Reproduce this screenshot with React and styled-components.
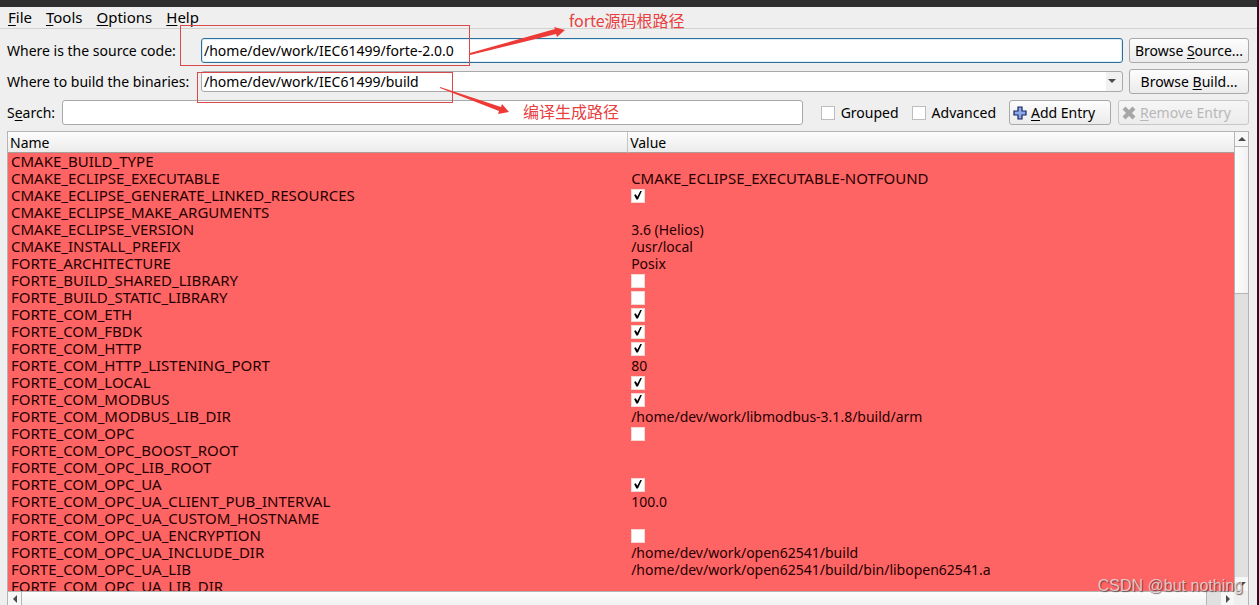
import { useState } from "react";
import styled, { createGlobalStyle } from "styled-components";

const GlobalStyle = createGlobalStyle`
  * {
    box-sizing: border-box;
  }

  body {
    margin: 0;
    overflow: hidden;
    background-color: #efefef;
    color: #000;
    font-family: "Noto Sans", "Noto Sans CJK SC", sans-serif;
    font-size: 14px;
    line-height: 17px;
  }

  input, select, button {
    font: inherit;
    color: inherit;
  }
`;

const Window = styled.div`
  position: relative;
  display: flex;
  flex-direction: column;
  height: 100vh;
  border-right: 2px solid #330a26;
`;

const TitleBar = styled.div`
  flex: none;
  height: 7px;
  background-color: #302f2f;
`;

const MenuBar = styled.nav`
  flex: none;
  display: flex;
  gap: 14px;
  height: 22px;
  padding: 0 8px;
  border-bottom: 1px solid #d2d2d2;
  font-size: 15px;
`;

const MenuItem = styled.button`
  padding: 0;
  border: none;
  background: none;
`;

const Key = styled.span`
  text-decoration: underline;
  text-decoration-thickness: 1px;
  text-underline-offset: 2px;
`;

const Main = styled.main`
  flex: 1;
  min-height: 0;
  display: flex;
  flex-direction: column;
  gap: 6px;
  padding: 9px 8px 0 7px;
`;

const PathRow = styled.div`
  flex: none;
  display: grid;
  grid-template-columns: 188px 1fr 120px;
  align-items: center;
  gap: 6px;
  height: 25px;
`;

const SearchRow = styled.div`
  flex: none;
  display: flex;
  align-items: center;
  height: 25px;
  gap: 7px;
`;

const Label = styled.label`
  white-space: nowrap;
`;

const TextInput = styled.input`
  width: 100%;
  min-width: 0;
  height: 25px;
  padding: 0 2px;
  border: 1px solid ${(props) => (props.$active ? "#2f6f97" : "#a9a9a9")};
  border-radius: 3px;
  background-color: #fff;
  box-shadow: ${(props) => (props.$active ? "inset 0 0 0 1px #d8eefa" : "none")};
  outline: none;
`;

const Combo = styled.div`
  position: relative;
  height: 21px;
`;

const Select = styled.select`
  display: block;
  width: 100%;
  height: 21px;
  padding: 0 2px;
  border: 1px solid #a9a9a9;
  border-radius: 3px;
  background: linear-gradient(#f1f1f1, #f1f1f1) right / 16px 100% no-repeat #fff;
  appearance: none;
  outline: none;
`;

const ComboArrow = styled.svg`
  position: absolute;
  top: 8px;
  right: 7px;
  pointer-events: none;
`;

const Button = styled.button`
  flex: none;
  display: flex;
  align-items: center;
  justify-content: ${(props) => (props.$width ? "flex-start" : "center")};
  gap: 4px;
  width: ${(props) => props.$width || "100%"};
  height: 25px;
  padding: 0 3px;
  border: 1px solid #a9a9a9;
  border-radius: 3px;
  background: linear-gradient(#fdfdfd, #ebebeb);
  white-space: nowrap;

  &:disabled {
    border-color: #c8c8c8;
    color: #b8b8b8;
    background: linear-gradient(#f6f6f6, #ececec);
  }
`;

const Options = styled.div`
  display: flex;
  gap: 13px;
  padding: 0 6px 0 11px;
`;

const Option = styled.label`
  display: flex;
  align-items: center;
  gap: 6px;
`;

const CheckBox = styled.input.attrs({ type: "checkbox" })`
  flex: none;
  display: block;
  width: 14px;
  height: 14px;
  margin: 0;
  border: 1px solid ${(props) => (props.$cell ? "#f3d8d4" : "#bdbdbd")};
  background-color: #fff;
  appearance: none;

  &:checked::before {
    content: "";
    display: block;
    width: 8px;
    height: 9px;
    margin: 1px 2px;
    background-color: #000;
    clip-path: polygon(0 50%, 20% 42%, 40% 70%, 80% 0, 100% 0, 48% 100%, 28% 100%);
  }
`;

const Panel = styled.div`
  flex: 1;
  min-height: 0;
  display: grid;
  grid-template-columns: 1fr 14px;
  grid-template-rows: 1fr 14px;
  border: 1px solid #b4b4b4;
  border-bottom: none;
`;

const TableArea = styled.div`
  min-height: 0;
  overflow: hidden;
  background-color: #ff6464;
`;

const Table = styled.table`
  width: 100%;
  border-collapse: separate;
  border-spacing: 0;
  table-layout: fixed;

  col:first-child {
    width: 50.5%;
  }
`;

const HeadCell = styled.th`
  height: 21px;
  padding: 0 2px;
  border-bottom: 1px solid #a9a09c;
  background: linear-gradient(#fdfdfd, #ebebeb);
  font-weight: 400;
  text-align: left;

  & + & {
    border-left: 1px solid #c4c4c4;
  }
`;

const Cell = styled.td`
  height: 17px;
  padding: 0 3px;
  color: #260000;
  font-size: ${(props) => (props.$constant ? "15px" : "14px")};
  white-space: nowrap;

  & + & {
    padding-left: 4px;
  }
`;

const ScrollBar = styled.div`
  display: flex;
  flex-direction: ${(props) => (props.$vertical ? "column" : "row")};
  background-color: #e0e0e0;
  border-left: ${(props) => (props.$vertical ? "1px solid #b4b4b4" : "none")};
  border-top: ${(props) => (props.$vertical ? "none" : "1px solid #b4b4b4")};
`;

const ScrollButton = styled.button`
  flex: none;
  display: flex;
  align-items: center;
  justify-content: center;
  width: 13px;
  height: 14px;
  padding: 0;
  border: none;
  background-color: #f7f7f7;
`;

const VerticalThumb = styled.div`
  height: 148px;
  margin-bottom: auto;
  border: solid #b4b4b4;
  border-width: 1px 0;
  background: linear-gradient(to right, #fdfdfd, #f1f1f1);
`;

const HorizontalThumb = styled.div`
  flex: 1;
  margin-right: 14px;
  border: solid #b4b4b4;
  border-width: 0 1px;
  background: linear-gradient(#fdfdfd, #f1f1f1);
`;

const Corner = styled.div`
  background-color: #efefef;
`;

const Mark = styled.div`
  position: absolute;
  top: ${(props) => props.$top}px;
  left: ${(props) => props.$left}px;
  width: ${(props) => props.$width}px;
  height: ${(props) => props.$height}px;
  border: 1px solid #d9484b;
  pointer-events: none;
`;

const Note = styled.div`
  position: absolute;
  top: ${(props) => props.$top}px;
  left: ${(props) => props.$left}px;
  color: #e8403f;
  font-family: "Noto Sans CJK SC", sans-serif;
  font-size: 16px;
  line-height: 20px;
  white-space: nowrap;
`;

const Arrows = styled.svg`
  position: absolute;
  top: 20px;
  left: 430px;
  pointer-events: none;
`;

const Watermark = styled.div`
  position: absolute;
  right: 14px;
  bottom: 9px;
  color: rgba(225, 215, 215, 0.9);
  font-family: "Liberation Sans", sans-serif;
  font-size: 16px;
  line-height: 20px;
  text-shadow: 1px 1px 1px rgba(70, 40, 40, 0.7);
  pointer-events: none;
`;

const menus = ["File", "Tools", "Options", "Help"];

// true and false are drawn as tick boxes, strings as text
const entries = [
  ["CMAKE_BUILD_TYPE", ""],
  ["CMAKE_ECLIPSE_EXECUTABLE", "CMAKE_ECLIPSE_EXECUTABLE-NOTFOUND"],
  ["CMAKE_ECLIPSE_GENERATE_LINKED_RESOURCES", true],
  ["CMAKE_ECLIPSE_MAKE_ARGUMENTS", ""],
  ["CMAKE_ECLIPSE_VERSION", "3.6 (Helios)"],
  ["CMAKE_INSTALL_PREFIX", "/usr/local"],
  ["FORTE_ARCHITECTURE", "Posix"],
  ["FORTE_BUILD_SHARED_LIBRARY", false],
  ["FORTE_BUILD_STATIC_LIBRARY", false],
  ["FORTE_COM_ETH", true],
  ["FORTE_COM_FBDK", true],
  ["FORTE_COM_HTTP", true],
  ["FORTE_COM_HTTP_LISTENING_PORT", "80"],
  ["FORTE_COM_LOCAL", true],
  ["FORTE_COM_MODBUS", true],
  ["FORTE_COM_MODBUS_LIB_DIR", "/home/dev/work/libmodbus-3.1.8/build/arm"],
  ["FORTE_COM_OPC", false],
  ["FORTE_COM_OPC_BOOST_ROOT", ""],
  ["FORTE_COM_OPC_LIB_ROOT", ""],
  ["FORTE_COM_OPC_UA", true],
  ["FORTE_COM_OPC_UA_CLIENT_PUB_INTERVAL", "100.0"],
  ["FORTE_COM_OPC_UA_CUSTOM_HOSTNAME", ""],
  ["FORTE_COM_OPC_UA_ENCRYPTION", false],
  ["FORTE_COM_OPC_UA_INCLUDE_DIR", "/home/dev/work/open62541/build"],
  ["FORTE_COM_OPC_UA_LIB", "/home/dev/work/open62541/build/bin/libopen62541.a"],
  ["FORTE_COM_OPC_UA_LIB_DIR", ""],
];

const arrowPaths = {
  up: "M0 6 L4 2 L8 6 Z",
  down: "M0 2 L8 2 L4 6 Z",
  left: "M6 0 L6 8 L2 4 Z",
  right: "M2 0 L6 4 L2 8 Z",
};

function isConstant(value) {
  return /^[A-Z]{2}/.test(value);
}

function Scroll({ direction }) {
  return (
    <ScrollButton aria-label={`Scroll ${direction}`}>
      <svg width="8" height="8">
        <path d={arrowPaths[direction]} fill="#4a4a4a" />
      </svg>
    </ScrollButton>
  );
}

function PlusIcon() {
  return (
    <svg width="14" height="14" viewBox="0 0 14 14">
      <path
        d="M5 1 H9 V5 H13 V9 H9 V13 H5 V9 H1 V5 H5 Z"
        fill="#8ea9ea"
        stroke="#17225c"
        strokeWidth="1.2"
      />
    </svg>
  );
}

function CrossIcon() {
  return (
    <svg width="14" height="14" viewBox="0 0 14 14">
      <path
        d="M3.5 3.5 L10.5 10.5 M10.5 3.5 L3.5 10.5"
        stroke="#a6a6a6"
        strokeWidth="4.2"
        strokeLinecap="square"
      />
    </svg>
  );
}

function EntryTable() {
  const [rows, setRows] = useState(entries);

  function toggle(name) {
    setRows(rows.map((row) => (row[0] === name ? [name, !row[1]] : row)));
  }

  return (
    <Table>
      <colgroup>
        <col />
        <col />
      </colgroup>
      <thead>
        <tr>
          <HeadCell>Name</HeadCell>
          <HeadCell>Value</HeadCell>
        </tr>
      </thead>
      <tbody>
        {rows.map(([name, value]) => (
          <tr key={name}>
            <Cell $constant>{name}</Cell>
            <Cell $constant={isConstant(value)}>
              {typeof value === "boolean" ? (
                <CheckBox $cell aria-label={name} checked={value} onChange={() => toggle(name)} />
              ) : (
                value
              )}
            </Cell>
          </tr>
        ))}
      </tbody>
    </Table>
  );
}

export default function App() {
  return (
    <>
      <GlobalStyle />
      <Window>
        <TitleBar />
        <MenuBar>
          {menus.map((menu) => (
            <MenuItem key={menu}>
              <Key>{menu[0]}</Key>
              {menu.slice(1)}
            </MenuItem>
          ))}
        </MenuBar>
        <Main>
          <PathRow>
            <Label htmlFor="source">Where is the source code:</Label>
            <TextInput id="source" $active defaultValue="/home/dev/work/IEC61499/forte-2.0.0" />
            <Button>
              <span>Browse <Key>S</Key>ource...</span>
            </Button>
          </PathRow>
          <PathRow>
            <Label htmlFor="binaries">Where to build the binaries:</Label>
            <Combo>
              <Select id="binaries">
                <option>/home/dev/work/IEC61499/build</option>
              </Select>
              <ComboArrow width="8" height="5">
                <path d="M0 0 L8 0 L4 4 Z" fill="#4a4a4a" />
              </ComboArrow>
            </Combo>
            <Button>
              <span>Browse <Key>B</Key>uild...</span>
            </Button>
          </PathRow>
          <SearchRow>
            <Label htmlFor="search">S<Key>e</Key>arch:</Label>
            <TextInput id="search" />
            <Options>
              <Option><CheckBox />Grouped</Option>
              <Option><CheckBox />Advanced</Option>
            </Options>
            <Button $width="102px">
              <PlusIcon />
              <span><Key>A</Key>dd Entry</span>
            </Button>
            <Button $width="131px" disabled>
              <CrossIcon />
              <span><Key>R</Key>emove Entry</span>
            </Button>
          </SearchRow>
          <Panel>
            <TableArea>
              <EntryTable />
            </TableArea>
            <ScrollBar $vertical>
              <Scroll direction="up" />
              <VerticalThumb />
              <Scroll direction="down" />
            </ScrollBar>
            <ScrollBar>
              <Scroll direction="left" />
              <HorizontalThumb />
              <Scroll direction="right" />
            </ScrollBar>
            <Corner />
          </Panel>
        </Main>
        <Mark $top={25} $left={180} $width={290} $height={41} />
        <Mark $top={72} $left={197} $width={256} $height={31} />
        <Arrows width="150" height="100">
          <path d="M40 33 L125 9 L124 7 L135 10 L127 17 L126 14 L40 35 Z" fill="#ee3a36" />
          <path d="M10 67 L71 87 L72 84 L79 92 L68 94 L69 91 L10 68 Z" fill="#ee3a36" />
        </Arrows>
        <Note $top={10} $left={569}>forte源码根路径</Note>
        <Note $top={101} $left={523}>编译生成路径</Note>
        <Watermark>CSDN @but nothing</Watermark>
      </Window>
    </>
  );
}
